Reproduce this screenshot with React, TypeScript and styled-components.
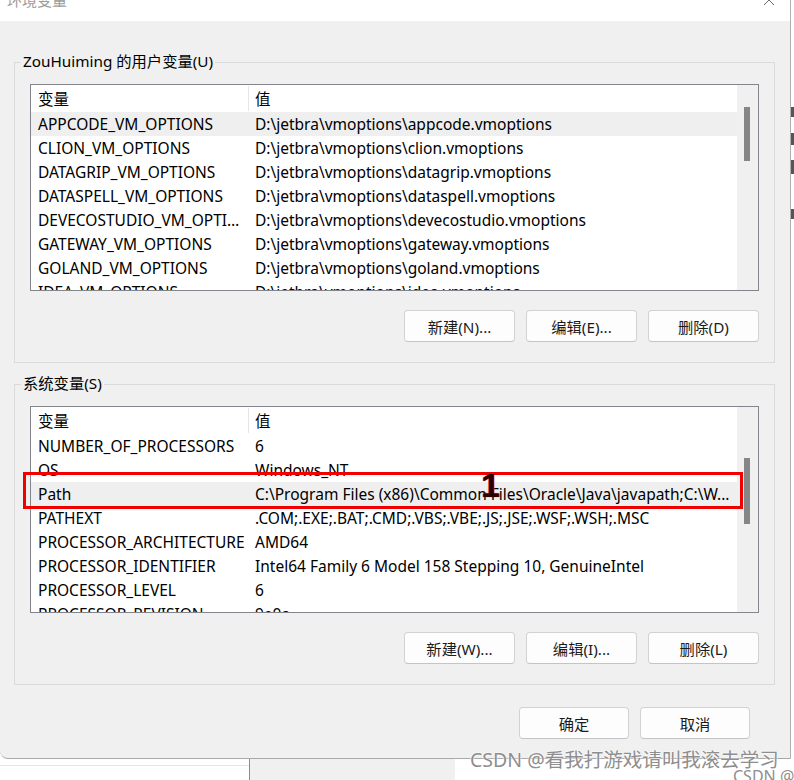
import React from 'react';
import styled, { createGlobalStyle } from 'styled-components';

const FONT = `"Noto Sans", "Noto Sans CJK SC", sans-serif`;

const Global = createGlobalStyle`
  html, body { margin: 0; padding: 0; background: #fff; }
  body { font-family: ${FONT}; color: #000; }
  #root { width: 794px; height: 780px; }
  * { box-sizing: border-box; }
`;

const Page = styled.div`
  position: relative;
  width: 794px;
  height: 780px;
  overflow: hidden;
  display: grid;
  grid-template-columns: 791px 3px;
  grid-template-rows: 759px 21px;
  font-family: ${FONT};
`;

const Dialog = styled.div`
  display: flex;
  flex-direction: column;
  background: #f0f0f0;
  border-right: 1px solid #b0b0b0;
  border-bottom: 1px solid #a9a9a9;
  border-bottom-left-radius: 8px;
  overflow: hidden;
`;

const TitleBar = styled.div`
  height: 21px;
  flex: none;
  background: #fff;
  display: flex;
  justify-content: space-between;
  align-items: flex-start;
  padding: 0 15px 0 7px;
  overflow: hidden;
`;

const Title = styled.div`
  font-size: 15px;
  line-height: 20px;
  color: #9c9c9c;
  margin-top: -10px;
`;

const CloseIcon = styled.svg`
  margin-top: -6px;
  flex: none;
`;

const Body = styled.div`
  flex: 1;
  padding: 41px 15px 0 14px;
  display: flex;
  flex-direction: column;
`;

const GroupBox = styled.section<{ $gap?: number }>`
  position: relative;
  border: 1px solid #dadada;
  padding: 21px 15px 20px 15px;
  margin-top: ${(p) => p.$gap ?? 0}px;
`;

const GroupTitle = styled.div`
  position: absolute;
  top: -12px;
  left: 6px;
  padding: 0 2px;
  background: #f0f0f0;
  font-size: 15.3px;
  line-height: 20px;
  white-space: nowrap;
`;

const ListWrap = styled.div`
  position: relative;
`;

const List = styled.div`
  height: 207px;
  border: 1px solid #82868c;
  background: #fff;
  display: flex;
  overflow: hidden;
`;

const Table = styled.div`
  flex: 1;
  min-width: 0;
  display: flex;
  flex-direction: column;
`;

const HeaderRow = styled.div`
  height: 27px;
  flex: none;
  display: grid;
  grid-template-columns: 218px 1fr;
  padding: 1px 0;
  font-size: 15.5px;
`;

const HeaderCell = styled.div<{ $first?: boolean }>`
  display: flex;
  align-items: center;
  padding: ${(p) => (p.$first ? '0 2px 0 7px' : '0 0 0 6px')};
  border-right: ${(p) => (p.$first ? '1px solid #e5e5e5' : 'none')};
`;

const Row = styled.div<{ $selected?: boolean }>`
  height: 24px;
  flex: none;
  display: grid;
  grid-template-columns: 218px 1fr;
  align-items: center;
  background: ${(p) => (p.$selected ? '#efefef' : 'transparent')};
  font-size: 15.5px;
  line-height: 24px;
`;

const Cell = styled.div<{ $first?: boolean }>`
  white-space: nowrap;
  overflow: hidden;
  text-overflow: ellipsis;
  padding: ${(p) => (p.$first ? '0 2px 0 7px' : '0 0 0 6px')};
  color: #000;
`;

const Track = styled.div<{ $offset: number }>`
  width: 21px;
  flex: none;
  background: #f0f0f0;
  padding: ${(p) => p.$offset}px 0 0 7px;
`;

const Thumb = styled.div<{ $h: number }>`
  width: 6px;
  height: ${(p) => p.$h}px;
  background: #868686;
`;

const ButtonRow = styled.div<{ $top: number; $right?: number }>`
  display: flex;
  justify-content: flex-end;
  gap: 11px;
  margin-top: ${(p) => p.$top}px;
  padding-right: ${(p) => p.$right ?? 0}px;
`;

const Button = styled.button<{ $w?: number }>`
  width: ${(p) => p.$w ?? 111}px;
  height: 32px;
  border: 1px solid #d2d2d2;
  border-bottom-color: #c4c4c4;
  border-radius: 4px;
  background: #fdfdfd;
  font-family: ${FONT};
  font-size: 15.3px;
  color: #1b1b1b;
  padding: 0;
  display: flex;
  align-items: center;
  justify-content: center;
`;

const Highlight = styled.div`
  position: absolute;
  left: -7px;
  top: 66px;
  width: 720px;
  height: 37px;
  border: 3px solid #f20000;
  pointer-events: none;
`;

const Marker = styled.div`
  position: absolute;
  left: 451px;
  top: 62px;
  font-family: "Liberation Sans", Arial, sans-serif;
  font-weight: bold;
  font-size: 33px;
  line-height: 36px;
  color: #2a0000;
  text-shadow: 0 0 1px #ff0000, 1px 0 0 #c00000;
`;

const SideStrip = styled.div`
  background: #fff;
  display: flex;
  flex-direction: column;
`;

const SideMark = styled.div<{ $h: number; $gap: number }>`
  height: ${(p) => p.$h}px;
  margin-top: ${(p) => p.$gap}px;
  background: #555;
  width: 3px;
`;

const BottomStrip = styled.div`
  grid-column: 1 / span 2;
  display: grid;
  grid-template-columns: 249px 1px 205px 1fr;
`;

const BottomWhite = styled.div`
  background: #fff;
  padding-top: 6px;
`;

const FaintLine = styled.div`
  height: 1px;
  background: #e6e6e6;
`;

const VLine = styled.div`
  background: #8c8c8c;
`;

const BottomGray = styled.div`
  background: #f0f0f0;
`;

const Watermark = styled.div<{ $size: number }>`
  position: absolute;
  font-family: "Noto Sans", "Noto Sans CJK SC", sans-serif;
  font-size: ${(p) => p.$size}px;
  line-height: 1;
  white-space: nowrap;
  color: #8e8e8e;
  text-shadow: 0 0 2px #fff, 0 0 2px #fff;
`;

type Item = [string, string, boolean?];

const userVars: Item[] = [
  ['APPCODE_VM_OPTIONS', 'D:\\jetbra\\vmoptions\\appcode.vmoptions', true],
  ['CLION_VM_OPTIONS', 'D:\\jetbra\\vmoptions\\clion.vmoptions'],
  ['DATAGRIP_VM_OPTIONS', 'D:\\jetbra\\vmoptions\\datagrip.vmoptions'],
  ['DATASPELL_VM_OPTIONS', 'D:\\jetbra\\vmoptions\\dataspell.vmoptions'],
  ['DEVECOSTUDIO_VM_OPTIONS', 'D:\\jetbra\\vmoptions\\devecostudio.vmoptions'],
  ['GATEWAY_VM_OPTIONS', 'D:\\jetbra\\vmoptions\\gateway.vmoptions'],
  ['GOLAND_VM_OPTIONS', 'D:\\jetbra\\vmoptions\\goland.vmoptions'],
  ['IDEA_VM_OPTIONS', 'D:\\jetbra\\vmoptions\\idea.vmoptions'],
];

const sysVars: Item[] = [
  ['NUMBER_OF_PROCESSORS', '6'],
  ['OS', 'Windows_NT'],
  ['Path', 'C:\\Program Files (x86)\\Common Files\\Oracle\\Java\\javapath;C:\\W...', true],
  ['PATHEXT', '.COM;.EXE;.BAT;.CMD;.VBS;.VBE;.JS;.JSE;.WSF;.WSH;.MSC'],
  ['PROCESSOR_ARCHITECTURE', 'AMD64'],
  ['PROCESSOR_IDENTIFIER', 'Intel64 Family 6 Model 158 Stepping 10, GenuineIntel'],
  ['PROCESSOR_LEVEL', '6'],
  ['PROCESSOR_REVISION', '9e0a'],
];

function VarList({ items, thumbTop, thumbH }: { items: Item[]; thumbTop: number; thumbH: number }) {
  return (
    <List>
      <Table>
        <HeaderRow>
          <HeaderCell $first>变量</HeaderCell>
          <HeaderCell>值</HeaderCell>
        </HeaderRow>
        {items.map(([k, v, sel]) => (
          <Row key={k} $selected={sel}>
            <Cell $first>{k}</Cell>
            <Cell>{v}</Cell>
          </Row>
        ))}
      </Table>
      <Track $offset={thumbTop}>
        <Thumb $h={thumbH} />
      </Track>
    </List>
  );
}

export default function App() {
  return (
    <>
      <Global />
      <Page>
        <Dialog>
          <TitleBar>
            <Title>环境变量</Title>
            <CloseIcon width="12" height="12" viewBox="0 0 12 12">
              <path d="M1 1 L11 11 M11 1 L1 11" stroke="#6a6a6a" strokeWidth="1" fill="none" />
            </CloseIcon>
          </TitleBar>
          <Body>
            <GroupBox>
              <GroupTitle>ZouHuiming 的用户变量(U)</GroupTitle>
              <ListWrap>
                <VarList items={userVars} thumbTop={22} thumbH={54} />
              </ListWrap>
              <ButtonRow $top={19}>
                <Button>新建(N)...</Button>
                <Button>编辑(E)...</Button>
                <Button>删除(D)</Button>
              </ButtonRow>
            </GroupBox>
            <GroupBox $gap={21}>
              <GroupTitle>系统变量(S)</GroupTitle>
              <ListWrap>
                <VarList items={sysVars} thumbTop={51} thumbH={66} />
                <Highlight />
                <Marker>1</Marker>
              </ListWrap>
              <ButtonRow $top={19}>
                <Button>新建(W)...</Button>
                <Button>编辑(I)...</Button>
                <Button>删除(L)</Button>
              </ButtonRow>
            </GroupBox>
            <ButtonRow $top={22} $right={25}>
              <Button $w={110}>确定</Button>
              <Button $w={110}>取消</Button>
            </ButtonRow>
          </Body>
        </Dialog>
        <SideStrip>
          <SideMark $h={10} $gap={107} />
          <SideMark $h={12} $gap={16} />
          <SideMark $h={14} $gap={15} />
          <SideMark $h={10} $gap={35} />
        </SideStrip>
        <BottomStrip>
          <BottomWhite>
            <FaintLine />
          </BottomWhite>
          <VLine />
          <BottomGray />
          <BottomWhite />
        </BottomStrip>
        <Watermark $size={19.5} style={{ left: 470, top: 750 }}>
          CSDN @看我打游戏请叫我滚去学习
        </Watermark>
        <Watermark $size={16} style={{ left: 733, top: 768 }}>
          CSDN @看
        </Watermark>
      </Page>
    </>
  );
}
